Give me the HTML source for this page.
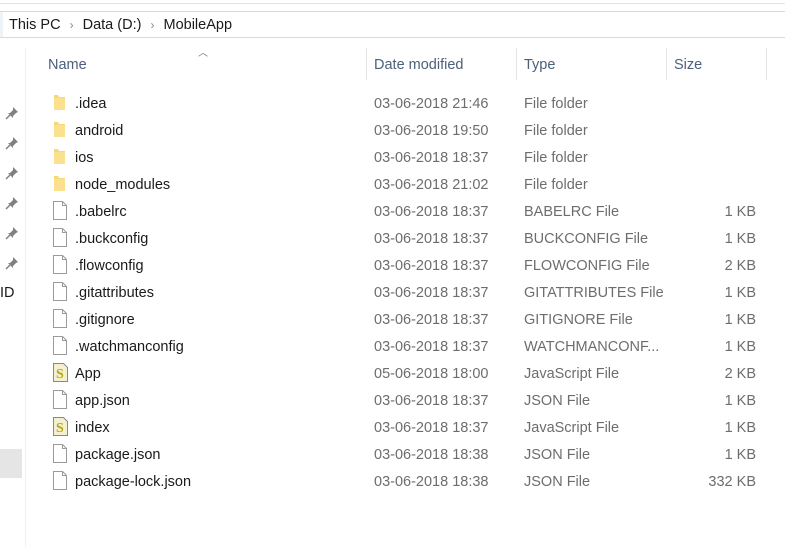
<!DOCTYPE html><html><head><meta charset="utf-8"><style>
body{margin:0;width:785px;height:547px;background:#fff;font-family:"Liberation Sans",sans-serif;position:relative;overflow:hidden}
.a{position:absolute;white-space:nowrap}
.r{position:absolute;left:0;width:785px;height:27px;font-size:14.5px;line-height:27px}
.r span{position:absolute;top:0}
.n{left:75px;color:#1a1a1a}.d{left:374px;color:#6d6d6d}.t{left:524px;color:#6d6d6d}.s{right:29px;color:#6d6d6d}
.ic{position:absolute;left:53px}
.sep{position:absolute;top:48px;width:1px;height:32px;background:#e5e5e5}
.h{position:absolute;top:57px;font-size:14.5px;color:#4c607a}
</style></head><body>
<div class="a" style="left:0;top:3px;width:785px;height:1px;background:#e3e3e3"></div>
<div class="a" style="left:0;top:11px;width:785px;height:1px;background:#d9d9d9"></div>
<div class="a" style="left:0;top:37px;width:785px;height:1px;background:#d9d9d9"></div>
<div class="a" style="left:0;top:12px;width:3px;height:25px;background:#eef3f8"></div>
<div class="a" style="left:9px;top:15px;font-size:14.5px;color:#1a1a1a;line-height:20px">This PC <span style="color:#888;font-size:12px;margin:0 5px">›</span> Data (D:) <span style="color:#888;font-size:12px;margin:0 5px">›</span> MobileApp</div>
<div class="a" style="left:25px;top:48px;width:1px;height:499px;background:#f0f0f0"></div>
<div class="a" style="left:198px;top:44px;color:#777;font-size:10px">︿</div>
<div class="h" style="left:48px">Name</div>
<div class="sep" style="left:366px"></div><div class="sep" style="left:516px"></div><div class="sep" style="left:666px"></div><div class="sep" style="left:766px"></div>
<div class="h" style="left:374px">Date modified</div>
<div class="h" style="left:524px">Type</div>
<div class="h" style="left:674px">Size</div>
<div class="a" style="left:0;top:449px;width:22px;height:29px;background:#e5e5e5"></div>
<div class="a" style="left:0;top:285px;font-size:14.5px;color:#1a1a1a">ID</div>
<div id="rows"></div>
<script>
var R=[["f",".idea","03-06-2018 21:46","File folder",""],["f","android","03-06-2018 19:50","File folder",""],["f","ios","03-06-2018 18:37","File folder",""],["f","node_modules","03-06-2018 21:02","File folder",""],["d",".babelrc","03-06-2018 18:37","BABELRC File","1 KB"],["d",".buckconfig","03-06-2018 18:37","BUCKCONFIG File","1 KB"],["d",".flowconfig","03-06-2018 18:37","FLOWCONFIG File","2 KB"],["d",".gitattributes","03-06-2018 18:37","GITATTRIBUTES File","1 KB"],["d",".gitignore","03-06-2018 18:37","GITIGNORE File","1 KB"],["d",".watchmanconfig","03-06-2018 18:37","WATCHMANCONF...","1 KB"],["j","App","05-06-2018 18:00","JavaScript File","2 KB"],["d","app.json","03-06-2018 18:37","JSON File","1 KB"],["j","index","03-06-2018 18:37","JavaScript File","1 KB"],["d","package.json","03-06-2018 18:38","JSON File","1 KB"],["d","package-lock.json","03-06-2018 18:38","JSON File","332 KB"]];
var h="";
for(var i=0;i<R.length;i++){var y=91+27*i,x=R[i],ic;
if(x[0]=="f")ic='<svg class="ic" style="top:3px" width="13" height="17"><path d="M1 1h4l1 2h6v13H1z" fill="#f8d775"/><path d="M1 4h11v12H1z" fill="#fbe08d"/></svg>';
else if(x[0]=="d")ic='<svg class="ic" style="top:2px" width="14" height="19"><path d="M.5.5h9l4 4v14H.5z" fill="#fff" stroke="#9a9a9a"/><path d="M9.5.5v4h4" fill="none" stroke="#9a9a9a"/></svg>';
else ic='<svg class="ic" style="top:2px" width="15" height="19"><path d="M.5.5h10l4 4v14H.5z" fill="#f4f0d0" stroke="#888"/><text x="3" y="15" font-size="14" font-weight="bold" fill="#b8a818" font-family="Liberation Serif">S</text></svg>';
h+='<div class="r" style="top:'+y+'px">'+ic+'<span class="n">'+x[1]+'</span><span class="d">'+x[2]+'</span><span class="t">'+x[3]+'</span><span class="s">'+x[4]+'</span></div>';}
for(var k=0;k<6;k++){h+='<svg class="a" style="left:5px;top:'+(106+30*k)+'px" width="14" height="14"><path d="M8 1l5 5-2 1-3 3 0 2-5-5 2 0 3-3z" fill="#808080"/><path d="M5 9l-4 4" stroke="#808080" stroke-width="1.5"/></svg>';}
document.getElementById("rows").innerHTML=h;
</script>
</body></html>
